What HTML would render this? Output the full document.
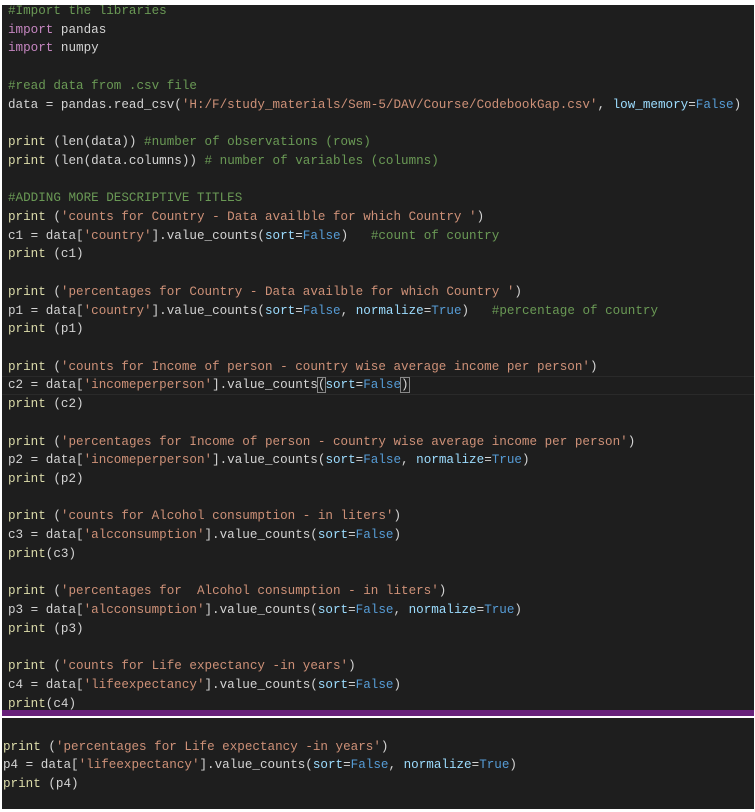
<!DOCTYPE html>
<html><head><meta charset="utf-8"><style>
html,body{margin:0;padding:0;background:#fff;width:755px;height:812px;overflow:hidden}
.ed{position:absolute;background:#1e1e1e;font-family:"Liberation Mono",monospace;font-size:12.6px;line-height:18.72px;color:#d4d4d4;white-space:pre}
#a{left:2px;top:5px;width:752px;height:705px;padding-left:6px;box-sizing:border-box;overflow:hidden}
#a .in{position:relative;top:-3px}
#b{left:2px;top:718px;width:752px;height:91px;padding-left:1px;box-sizing:border-box}
#b .in{position:relative;top:1px}
.bar{position:absolute;left:2px;top:710px;width:752px;height:6px;background:#68217a}
.c{color:#6a9955}.k{color:#c586c0}.s{color:#ce9178}.p{color:#9cdcfe}.b{color:#569cd6}.f{color:#dcdcaa}
.hl{display:block;position:absolute;left:-6px;width:752px;height:17px;border-top:1px solid #2a2a2a;border-bottom:1px solid #2a2a2a}
.bx{outline:1px solid #888;}
</style></head><body>
<div class="ed" id="a"><div class="in"><span class="hl" style="top:374px"></span><span class="c">#Import the libraries</span>
<span class="k">import</span> pandas
<span class="k">import</span> numpy

<span class="c">#read data from .csv file</span>
data = pandas.read_csv(<span class="s">'H:/F/study_materials/Sem-5/DAV/Course/CodebookGap.csv'</span>, <span class="p">low_memory</span>=<span class="b">False</span>)

<span class="f">print</span> (len(data)) <span class="c">#number of observations (rows)</span>
<span class="f">print</span> (len(data.columns)) <span class="c"># number of variables (columns)</span>

<span class="c">#ADDING MORE DESCRIPTIVE TITLES</span>
<span class="f">print</span> (<span class="s">'counts for Country - Data availble for which Country '</span>)
c1 = data[<span class="s">'country'</span>].value_counts(<span class="p">sort</span>=<span class="b">False</span>)   <span class="c">#count of country</span>
<span class="f">print</span> (c1)

<span class="f">print</span> (<span class="s">'percentages for Country - Data availble for which Country '</span>)
p1 = data[<span class="s">'country'</span>].value_counts(<span class="p">sort</span>=<span class="b">False</span>, <span class="p">normalize</span>=<span class="b">True</span>)   <span class="c">#percentage of country</span>
<span class="f">print</span> (p1)

<span class="f">print</span> (<span class="s">'counts for Income of person - country wise average income per person'</span>)
c2 = data[<span class="s">'incomeperperson'</span>].value_counts<span class="bx">(</span><span class="p">sort</span>=<span class="b">False</span><span class="bx">)</span>
<span class="f">print</span> (c2)

<span class="f">print</span> (<span class="s">'percentages for Income of person - country wise average income per person'</span>)
p2 = data[<span class="s">'incomeperperson'</span>].value_counts(<span class="p">sort</span>=<span class="b">False</span>, <span class="p">normalize</span>=<span class="b">True</span>)
<span class="f">print</span> (p2)

<span class="f">print</span> (<span class="s">'counts for Alcohol consumption - in liters'</span>)
c3 = data[<span class="s">'alcconsumption'</span>].value_counts(<span class="p">sort</span>=<span class="b">False</span>)
<span class="f">print</span>(c3)

<span class="f">print</span> (<span class="s">'percentages for  Alcohol consumption - in liters'</span>)
p3 = data[<span class="s">'alcconsumption'</span>].value_counts(<span class="p">sort</span>=<span class="b">False</span>, <span class="p">normalize</span>=<span class="b">True</span>)
<span class="f">print</span> (p3)

<span class="f">print</span> (<span class="s">'counts for Life expectancy -in years'</span>)
c4 = data[<span class="s">'lifeexpectancy'</span>].value_counts(<span class="p">sort</span>=<span class="b">False</span>)
<span class="f">print</span>(c4)</div></div>
<div class="bar"></div>
<div class="ed" id="b"><div class="in">
<span class="f">print</span> (<span class="s">'percentages for Life expectancy -in years'</span>)
p4 = data[<span class="s">'lifeexpectancy'</span>].value_counts(<span class="p">sort</span>=<span class="b">False</span>, <span class="p">normalize</span>=<span class="b">True</span>)
<span class="f">print</span> (p4)</div></div>
</body></html>
